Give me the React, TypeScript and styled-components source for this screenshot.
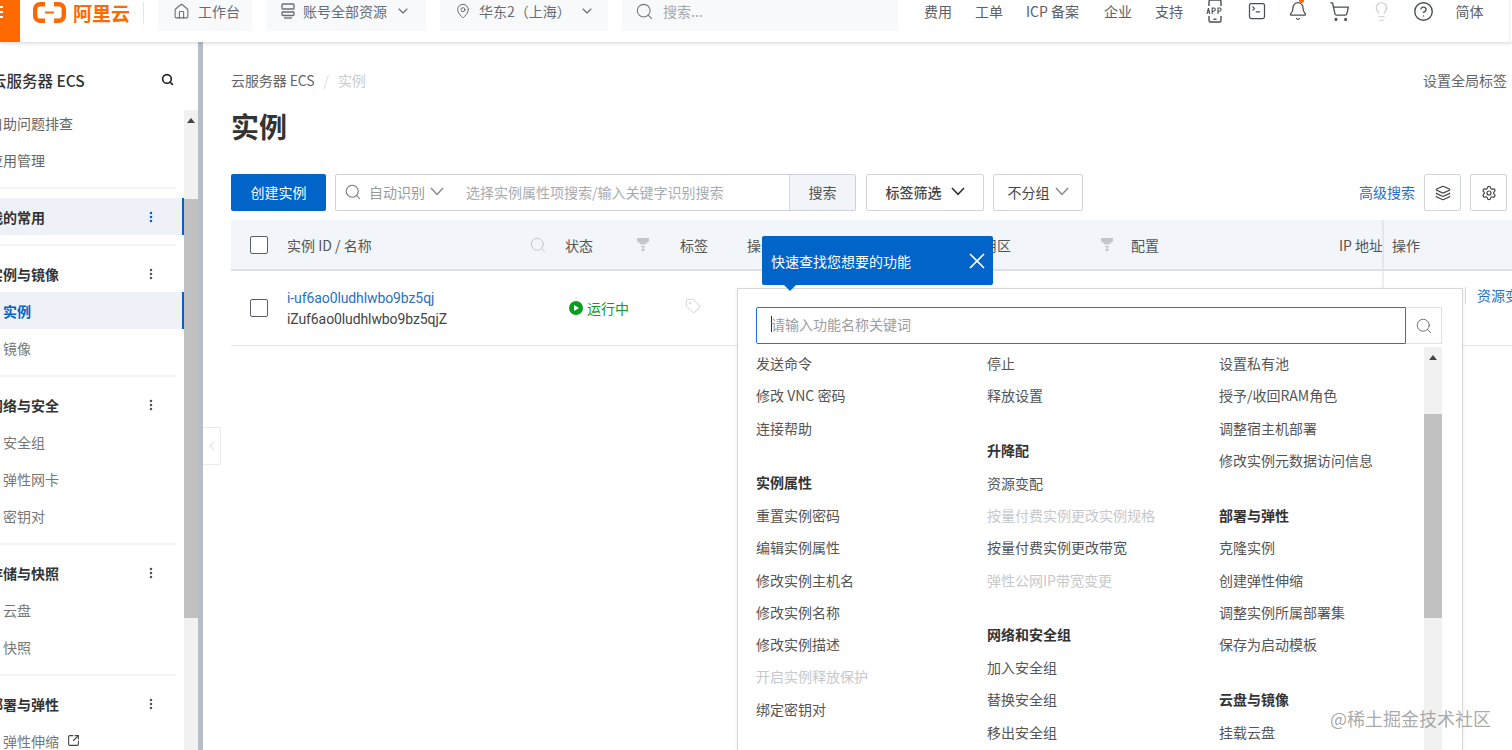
import React from "react";
import styled, { createGlobalStyle } from "styled-components";
import {
  Bell,
  ChevronDown,
  ChevronLeft,
  CircleHelp,
  EllipsisVertical,
  Home,
  Layers,
  Lightbulb,
  MapPin,
  Search,
  Settings,
  ShoppingCart,
  SquareArrowOutUpRight,
  SquareTerminal,
  Tag,
  X,
} from "lucide-react";

const GlobalStyle = createGlobalStyle`
  html, body {
    margin: 0;
    padding: 0;
    height: 100%;
    overflow: hidden;
    background: #fff;
  }
  * { box-sizing: border-box; }
  body {
    font-family: "Noto Sans CJK SC", "Noto Sans", sans-serif;
    font-size: 14px;
    color: #333;
  }
`;

const SIDE_GROUPS = [
  { title: "自助问题排查", plain: true, items: ["应用管理"] },
  { title: "我的常用", active: true, items: [] },
  { title: "实例与镜像", items: ["实例", "镜像"], current: "实例" },
  { title: "网络与安全", items: ["安全组", "弹性网卡", "密钥对"] },
  { title: "存储与快照", items: ["云盘", "快照"] },
  { title: "部署与弹性", items: ["弹性伸缩"], external: "弹性伸缩" },
];

const MENU_COLUMNS = [
  [
    { items: ["发送命令", "修改 VNC 密码", "连接帮助"] },
    {
      title: "实例属性",
      items: ["重置实例密码", "编辑实例属性", "修改实例主机名", "修改实例名称", "修改实例描述", "开启实例释放保护", "绑定密钥对"],
      disabled: ["开启实例释放保护"],
    },
  ],
  [
    { items: ["停止", "释放设置"] },
    {
      title: "升降配",
      items: ["资源变配", "按量付费实例更改实例规格", "按量付费实例更改带宽", "弹性公网IP带宽变更"],
      disabled: ["按量付费实例更改实例规格", "弹性公网IP带宽变更"],
    },
    { title: "网络和安全组", items: ["加入安全组", "替换安全组", "移出安全组"] },
  ],
  [
    { items: ["设置私有池", "授予/收回RAM角色", "调整宿主机部署", "修改实例元数据访问信息"] },
    { title: "部署与弹性", items: ["克隆实例", "创建弹性伸缩", "调整实例所属部署集", "保存为启动模板"] },
    { title: "云盘与镜像", items: ["挂载云盘"] },
  ],
];

const Funnel = () => (
  <svg width="12" height="13" viewBox="0 0 12 13" fill="#c4c6cb">
    <path d="M0 0h12v3L8 6.5h-4L0 3z" />
    <path d="M4 8h4v1.6H4zM4.6 10.6h2.8V13H4.6z" />
  </svg>
);

const WideChevron = ({ color = "#888", weight = 1.4 }: { color?: string; weight?: number }) => (
  <svg width="14" height="9" viewBox="0 0 14 9" fill="none" stroke={color} strokeWidth={weight}>
    <path d="M1 1l6 6.400L13 1" />
  </svg>
);

const ResourceIcon = () => (
  <svg width="14" height="16" viewBox="0 0 14 16" fill="none" stroke="#666c75" strokeWidth="1.3">
    <rect x="1" y="1" width="12" height="5" rx="1" />
    <path d="M1 9h12M1 9v2.500a1 1 0 0 0 1 1h10a1 1 0 0 0 1-1V9" />
    <path d="M3 15h8" />
  </svg>
);

const AppIcon = () => (
  <svg width="18" height="24" viewBox="0 0 18 24" fill="none" stroke="#4a4f57" strokeWidth="1.4">
    <path d="M3 7V2.500A1.500 1.500 0 0 1 4.500 1h9A1.500 1.500 0 0 1 15 2.500V7" />
    <path d="M3 17v4.500A1.500 1.500 0 0 0 4.500 23h9a1.500 1.500 0 0 0 1.500-1.500V17" />
    <path d="M7.500 20.200h3" />
    <path d="M1 15l1.400-6 1.400 6M1.500 13h1.800M6.200 15V9h1.500a1.500 1.500 0 0 1 0 3.200H6.200M12 15V9h1.500a1.500 1.500 0 0 1 0 3.200H12" strokeWidth="1.1" />
  </svg>
);

const LogoMark = () => (
  <svg width="33" height="21" viewBox="0 0 33 21" fill="none" stroke="#ff6a00" strokeWidth="4.4">
    <path d="M12 2.200H7A4.800 4.800 0 0 0 2.200 7v7A4.800 4.800 0 0 0 7 18.800h5" />
    <path d="M21 2.200h5A4.800 4.800 0 0 1 30.800 7v7a4.800 4.800 0 0 1-4.800 4.800h-5" />
    <path d="M12 10.500h9" strokeWidth="2" />
  </svg>
);

export default function App() {
  return (
    <Page>
      <GlobalStyle />
      <TopBar>
        <BurgerTile>
          <BurgerLines />
        </BurgerTile>
        <Logo>
          <LogoMark />
          <LogoText>阿里云</LogoText>
        </Logo>
        <TopDivider />
        <TopButton $width={94}>
          <Home size={17} strokeWidth={1.5} />
          工作台
        </TopButton>
        <TopButton $width={160}>
          <ResourceIcon />
          账号全部资源
          <ChevronDown size={16} strokeWidth={1.6} />
        </TopButton>
        <TopButton $width={168}>
          <MapPin size={16} strokeWidth={1.5} />
          华东2（上海）
          <ChevronDown size={16} strokeWidth={1.6} />
        </TopButton>
        <TopSearch>
          <Search size={19} strokeWidth={1.3} color="#777" />
          搜索...
        </TopSearch>
        <TopLinks>
          <TopLink>费用</TopLink>
          <TopLink>工单</TopLink>
          <TopLink $wide>ICP 备案</TopLink>
          <TopLink>企业</TopLink>
          <TopLink>支持</TopLink>
          <TopIcon><AppIcon /></TopIcon>
          <TopIcon><SquareTerminal size={20} strokeWidth={1.5} /></TopIcon>
          <TopIcon>
            <Bell size={20} strokeWidth={1.5} />
            <BellDot />
          </TopIcon>
          <TopIcon><ShoppingCart size={21} strokeWidth={1.5} /></TopIcon>
          <TopIcon $muted><Lightbulb size={21} strokeWidth={1.4} /></TopIcon>
          <TopIcon><CircleHelp size={21} strokeWidth={1.6} /></TopIcon>
          <TopLink>简体</TopLink>
        </TopLinks>
        <EdgeLine />
      </TopBar>

      <Body>
        <Sidebar>
          <SideInner>
            <SideTitleRow>
              <SideTitle>云服务器 ECS</SideTitle>
              <Search size={13} strokeWidth={3} color="#222" />
            </SideTitleRow>
            {SIDE_GROUPS.map((group, i) => (
              <SideGroup key={group.title} $first={i === 0}>
                <SideHeading $active={group.active} $plain={group.plain}>
                  <SideCut>{group.title}</SideCut>
                  {!group.plain && (
                    <Dots $active={group.active}>
                      <EllipsisVertical size={14} strokeWidth={2.4} />
                    </Dots>
                  )}
                </SideHeading>
                {group.items.map((item) => (
                  <SideItem key={item} $current={item === group.current} $plain={group.plain}>
                    <span>{item}</span>
                    {item === group.external && <SquareArrowOutUpRight size={13} strokeWidth={2} color="#444" />}
                  </SideItem>
                ))}
              </SideGroup>
            ))}
          </SideInner>
          <SideScroll>
            <ScrollArrow />
            <SideThumb />
          </SideScroll>
        </Sidebar>
        <SideEdge />

        <Main>
          <CollapseHandle>
            <ChevronLeft size={14} strokeWidth={1} color="#b5b9c0" />
          </CollapseHandle>
          <TopLine>
            <Breadcrumb>
              云服务器 ECS
              <CrumbSep>/</CrumbSep>
              <CrumbNow>实例</CrumbNow>
            </Breadcrumb>
            <GlobalTag>设置全局标签</GlobalTag>
          </TopLine>
          <PageTitle>实例</PageTitle>

          <Toolbar>
            <PrimaryButton>创建实例</PrimaryButton>
            <SearchBox>
              <SearchField>
                <Search size={18} strokeWidth={1.4} color="#777" />
                <SearchMode>
                  自动识别
                  <WideChevron />
                </SearchMode>
                <SearchHint>选择实例属性项搜索/输入关键字识别搜索</SearchHint>
              </SearchField>
              <SearchButton>搜索</SearchButton>
            </SearchBox>
            <GhostButton $width={118} $bold>
              标签筛选
              <WideChevron color="#333" weight={1.6} />
            </GhostButton>
            <GhostButton $width={90}>
              不分组
              <WideChevron />
            </GhostButton>
            <AdvancedLink>高级搜索</AdvancedLink>
            <IconButton><Layers size={16} strokeWidth={1.8} /></IconButton>
            <IconButton><Settings size={16} strokeWidth={1.8} /></IconButton>
          </Toolbar>

          <Table>
            <HeadRow>
              <CheckCell><CheckBox /></CheckCell>
              <HeadCell>
                实例 ID / 名称
                <Search size={18} strokeWidth={1.3} color="#bfc2c7" />
              </HeadCell>
              <HeadCell>状态<Funnel /></HeadCell>
              <HeadCell>标签</HeadCell>
              <HeadCell>操作系统</HeadCell>
              <HeadCell>可用区<Funnel /></HeadCell>
              <HeadCell>配置</HeadCell>
              <HeadCell>IP 地址</HeadCell>
              <StickyCell>操作</StickyCell>
            </HeadRow>
            <DataRow>
              <CheckCell><CheckBox /></CheckCell>
              <IdCell>
                <IdLink>i-uf6ao0ludhlwbo9bz5qj</IdLink>
                <span>iZuf6ao0ludhlwbo9bz5qjZ</span>
              </IdCell>
              <StatusCell>
                <PlayDot />
                运行中
              </StatusCell>
              <TagCell><Tag size={16} strokeWidth={1.2} color="#c4c6cb" /></TagCell>
              <span />
              <span />
              <span />
              <span />
              <StickyData>
                <RowLink>资源变配</RowLink>
              </StickyData>
            </DataRow>
          </Table>
        </Main>
      </Body>

      <Tip>
        快速查找您想要的功能
        <X size={26} strokeWidth={1.6} color="#fff" />
      </Tip>

      <Finder>
        <FinderSearch>
          <FinderInput>
            <Caret />
            请输入功能名称关键词
          </FinderInput>
          <FinderButton><Search size={18} strokeWidth={1.2} color="#666" /></FinderButton>
        </FinderSearch>
        <FinderBody>
          <FinderGrid>
            {MENU_COLUMNS.map((column, c) => (
              <div key={c}>
                {column.map((group, g) => (
                  <FinderGroup key={g} $first={g === 0}>
                    {group.title && <FinderTitle>{group.title}</FinderTitle>}
                    {group.items.map((item) => (
                      <FinderItem key={item} $disabled={group.disabled?.includes(item)}>
                        {item}
                      </FinderItem>
                    ))}
                  </FinderGroup>
                ))}
              </div>
            ))}
          </FinderGrid>
          <FinderScroll>
            <ScrollArrow />
            <FinderThumb />
          </FinderScroll>
        </FinderBody>
      </Finder>

      <Watermark>@稀土掘金技术社区</Watermark>
    </Page>
  );
}

const Page = styled.div`
  position: relative;
  width: 1512px;
  height: 750px;
  overflow: hidden;
  background: #fff;
  display: flex;
  flex-direction: column;
`;

const TopBar = styled.header`
  position: relative;
  z-index: 3;
  flex: 0 0 42px;
  display: flex;
  align-items: flex-start;
  background: #fff;
  box-shadow: 0 1px 4px rgba(0, 0, 0, 0.18);
`;

const BurgerTile = styled.div`
  width: 20px;
  height: 42px;
  background: #ff6a00;
  overflow: hidden;
`;

const BurgerLines = styled.div`
  width: 3px;
  height: 13px;
  margin-top: 6px;
  background: repeating-linear-gradient(#fff 0 2px, transparent 2px 5px);
`;

const Logo = styled.div`
  display: flex;
  align-items: center;
  gap: 7px;
  height: 25px;
  margin-left: 13px;
  width: 97px;
`;

const LogoText = styled.span`
  color: #ff6a00;
  font-size: 19px;
  line-height: 25px;
  font-weight: 700;
  white-space: nowrap;
`;

const TopDivider = styled.div`
  width: 1px;
  height: 22px;
  margin: 2px 14px 0 13px;
  background: #e3e5e8;
`;

const TopButton = styled.div<{ $width: number }>`
  width: ${(p) => p.$width}px;
  height: 31px;
  margin-right: 14px;
  padding: 0 15px 9px;
  display: flex;
  align-items: center;
  gap: 8px;
  background: #f8f9fa;
  color: #666c75;
  font-size: 14px;
  white-space: nowrap;

  svg {
    flex: none;
  }

  svg:last-child:not(:first-child) {
    margin-left: auto;
  }
`;

const TopSearch = styled.div`
  width: 276px;
  height: 31px;
  padding: 0 13px 9px;
  display: flex;
  align-items: center;
  gap: 9px;
  background: #f8f9fa;
  color: #a5a8ad;
  font-size: 14px;
`;

const TopLinks = styled.nav`
  flex: 1;
  display: flex;
  align-items: center;
  height: 22px;
  margin-left: 26px;
`;

const TopLink = styled.span<{ $wide?: boolean }>`
  margin-right: ${(p) => (p.$wide ? "25px" : "23px")};
  color: #5c6066;
  font-size: 14px;
  white-space: nowrap;
`;

const TopIcon = styled.span<{ $muted?: boolean }>`
  position: relative;
  display: flex;
  justify-content: center;
  width: 18px;
  margin-right: 23.6px;
  color: ${(p) => (p.$muted ? "#c9ccd0" : "#4a4f57")};

  svg {
    flex: none;
  }
`;

const BellDot = styled.i`
  position: absolute;
  top: -3px;
  right: 3px;
  width: 5px;
  height: 5px;
  border-radius: 50%;
  background: #ff6a00;
`;

const EdgeLine = styled.div`
  position: absolute;
  top: 0;
  left: 1509px;
  width: 1px;
  height: 42px;
  background: #eceef0;
`;

const Body = styled.div`
  flex: 1;
  min-height: 0;
  display: flex;
`;

const Sidebar = styled.aside`
  width: 198px;
  display: flex;
  overflow: hidden;
`;

const SideInner = styled.div`
  width: 184px;
  flex: none;
`;

const SideTitleRow = styled.div`
  height: 59px;
  padding: 16px 10px 0 0;
  display: flex;
  align-items: center;
  justify-content: space-between;
`;

const SideTitle = styled.div`
  margin-left: -9px;
  font-size: 15.5px;
  font-weight: 500;
  color: #333;
  white-space: nowrap;
`;

const SideGroup = styled.section<{ $first?: boolean }>`
  padding: ${(p) => (p.$first ? "3px 0 9px" : "9px 0 9px")};
  border-bottom: 2px solid #f3f4f6;
  margin-right: 8px;
`;

const SideHeading = styled.div<{ $active?: boolean; $plain?: boolean }>`
  height: 37px;
  margin-right: -8px;
  display: flex;
  align-items: center;
  justify-content: space-between;
  font-weight: ${(p) => (p.$plain ? 400 : 700)};
  color: ${(p) => (p.$plain ? "#666" : "#333")};
  background: ${(p) => (p.$active ? "#eef2f8" : "transparent")};
  border-right: 2px solid ${(p) => (p.$active ? "#0064c8" : "transparent")};
  padding-right: 24px;
`;

const SideCut = styled.span`
  margin-left: -11px;
  font-size: 14px;
  white-space: nowrap;
`;

const Dots = styled.span<{ $active?: boolean }>`
  display: flex;
  color: ${(p) => (p.$active ? "#0064c8" : "#555")};
`;

const SideItem = styled.div<{ $current?: boolean; $plain?: boolean }>`
  height: 37px;
  margin-right: -8px;
  padding-left: ${(p) => (p.$plain ? "0" : "3px")};
  display: flex;
  align-items: center;
  gap: 8px;
  white-space: nowrap;
  color: ${(p) => (p.$current ? "#0064c8" : p.$plain ? "#666" : "#777")};
  font-weight: ${(p) => (p.$current ? 700 : 400)};
  background: ${(p) => (p.$current ? "#eef2f8" : "transparent")};
  border-right: 2px solid ${(p) => (p.$current ? "#0064c8" : "transparent")};

  span {
    margin-left: ${(p) => (p.$plain ? "-11px" : "0")};
  }
`;

const SideScroll = styled.div`
  width: 14px;
  flex: none;
  margin-top: 68px;
  background: #f1f1f1;
  display: flex;
  flex-direction: column;
`;

const ScrollArrow = styled.div`
  flex: none;
  align-self: center;
  width: 0;
  height: 0;
  margin-top: 8px;
  border-left: 4px solid transparent;
  border-right: 4px solid transparent;
  border-bottom: 5px solid #444;
`;

const SideThumb = styled.div`
  height: 419px;
  margin-top: 76px;
  background: #c1c1c1;
`;

const SideEdge = styled.div`
  width: 5px;
  flex: none;
  background: #b9bdca;
`;

const Main = styled.main`
  position: relative;
  flex: 1;
  min-width: 0;
  padding: 28px 0 0 28px;
`;

const CollapseHandle = styled.div`
  position: absolute;
  top: 385px;
  left: 0;
  width: 18px;
  height: 38px;
  display: flex;
  align-items: center;
  justify-content: center;
  background: #fff;
  border: 1px solid #e8eaed;
  border-left: none;
  border-radius: 0 2px 2px 0;
`;

const TopLine = styled.div`
  display: flex;
  justify-content: space-between;
  align-items: center;
  height: 20px;
  padding-right: 5px;
`;

const Breadcrumb = styled.div`
  display: flex;
  align-items: center;
  color: #666;
  font-size: 14px;
  letter-spacing: -0.1px;
`;

const CrumbSep = styled.span`
  margin: 0 9px 0 9px;
  color: #dcdee1;
`;

const CrumbNow = styled.span`
  color: #c9ccd0;
`;

const GlobalTag = styled.span`
  color: #666;
  font-size: 14px;
`;

const PageTitle = styled.h1`
  margin: 16px 0 0;
  height: 40px;
  font-size: 28px;
  line-height: 40px;
  font-weight: 700;
  color: #333;
`;

const Toolbar = styled.div`
  margin-top: 28px;
  height: 37px;
  display: flex;
  align-items: stretch;
  padding-right: 5px;
`;

const PrimaryButton = styled.button`
  width: 95px;
  padding: 0 0 2px;
  border: none;
  border-radius: 2px;
  background: #0064c8;
  color: #fff;
  font: inherit;
  font-size: 14px;
`;

const SearchBox = styled.div`
  width: 521px;
  margin: 0 10px 0 9px;
  display: flex;
  border: 1px solid #cfd2d6;
  border-radius: 2px;
`;

const SearchField = styled.div`
  flex: 1;
  display: flex;
  align-items: center;
  padding: 0 0 2px 8px;
  color: #a3a6ab;
`;

const SearchMode = styled.span`
  display: flex;
  align-items: center;
  gap: 5px;
  margin-left: 7px;
  color: #999;
`;

const SearchHint = styled.span`
  margin-left: 22px;
  color: #a8abb0;
`;

const SearchButton = styled.div`
  width: 66px;
  padding-bottom: 2px;
  display: flex;
  align-items: center;
  justify-content: center;
  background: #f1f4f8;
  border-left: 1px solid #d5d8dc;
  color: #555;
`;

const GhostButton = styled.div<{ $width: number; $bold?: boolean }>`
  width: ${(p) => p.$width}px;
  margin-right: 9px;
  padding-bottom: 2px;
  display: flex;
  align-items: center;
  justify-content: center;
  gap: ${(p) => (p.$bold ? "9px" : "5px")};
  border: 1px solid #d2d5d9;
  border-radius: 2px;
  color: #444;
  font-weight: ${(p) => (p.$bold ? 500 : 400)};
`;

const AdvancedLink = styled.a`
  margin-left: auto;
  margin-right: 9px;
  padding-bottom: 2px;
  align-self: center;
  color: #2a6fc0;
`;

const IconButton = styled.div`
  width: 37px;
  display: flex;
  align-items: center;
  justify-content: center;
  border: 1px solid #d2d5d9;
  border-radius: 2px;
  color: #444;

  & + & {
    margin-left: 9px;
  }
`;

const Table = styled.div`
  margin-top: 9px;
  margin-right: -2px;
`;

const COLUMNS = "56px 278px 115px 67px 222px 162px 208px 53px 120px";

const HeadRow = styled.div`
  display: grid;
  grid-template-columns: ${COLUMNS};
  height: 51px;
  align-items: center;
  background: #f2f5f9;
  border-bottom: 2px solid #dcdfe3;
  color: #555;
  white-space: nowrap;
`;

const DataRow = styled.div`
  display: grid;
  grid-template-columns: ${COLUMNS};
  height: 75px;
  align-items: center;
  background: #fff;
  border-bottom: 1px solid #e6e8eb;
`;

const CheckCell = styled.div`
  display: flex;
  padding-left: 19px;
`;

const CheckBox = styled.span`
  width: 18px;
  height: 18px;
  border: 1px solid #555f70;
  border-radius: 2px;
  background: #fff;
`;

const HeadCell = styled.div`
  display: flex;
  align-items: center;
  justify-content: space-between;
  padding-right: 18px;
  font-size: 14px;
  min-width: 0;

  &:nth-child(3) {
    padding-right: 31px;
  }

  &:nth-child(8) {
    padding-right: 0;
  }
`;

const StickyCell = styled.div`
  align-self: stretch;
  display: flex;
  align-items: center;
  margin-left: -10px;
  padding-left: 8px;
  border-left: 2px solid #e3e6ea;
  background: #f2f5f9;
`;

const StickyData = styled.div`
  align-self: stretch;
  display: flex;
  margin-left: -10px;
  padding: 16px 0 0 92px;
  border-left: 2px solid #eceef1;
`;

const RowLink = styled.a`
  padding-left: 11px;
  margin-left: -11px;
  height: 17px;
  line-height: 17px;
  border-left: 1px solid #d5d8dc;
  color: #2a6fc0;
  white-space: nowrap;
`;

const IdCell = styled.div`
  display: flex;
  flex-direction: column;
  gap: 1px;
  color: #444;
  font-family: Roboto, "Noto Sans CJK SC", sans-serif;
  font-size: 14px;
  letter-spacing: -0.1px;
  line-height: 20px;
`;

const IdLink = styled.a`
  color: #2a6fc0;
`;

const StatusCell = styled.div`
  display: flex;
  align-items: center;
  gap: 4px;
  padding-left: 4px;
  color: #0a9e2a;
`;

const PlayDot = styled.i`
  position: relative;
  width: 14px;
  height: 14px;
  border-radius: 50%;
  background: #0a9e1f;

  &::after {
    content: "";
    position: absolute;
    top: 3.5px;
    left: 5px;
    border-left: 5px solid #fff;
    border-top: 3.5px solid transparent;
    border-bottom: 3.5px solid transparent;
  }
`;

const TagCell = styled.div`
  display: flex;
  padding: 0 0 4px 5px;
`;

const Tip = styled.div`
  position: absolute;
  z-index: 5;
  top: 236px;
  left: 762px;
  width: 231px;
  height: 49px;
  padding: 0 3px 0 9px;
  display: flex;
  align-items: center;
  justify-content: space-between;
  background: #0064c8;
  border-radius: 2px;
  color: #fff;
  font-size: 14px;

  &::after {
    content: "";
    position: absolute;
    left: 22px;
    bottom: -6px;
    border-left: 6px solid transparent;
    border-right: 6px solid transparent;
    border-top: 6px solid #0064c8;
  }
`;

const Finder = styled.div`
  position: absolute;
  z-index: 4;
  top: 288px;
  left: 737px;
  width: 726px;
  height: 470px;
  padding: 18px 20px 0 18px;
  background: #fff;
  border: 1px solid #d5d7da;
  box-shadow: 0 1px 4px rgba(0, 0, 0, 0.08);
`;

const FinderSearch = styled.div`
  display: flex;
  height: 37px;
`;

const FinderInput = styled.div`
  flex: 1;
  display: flex;
  align-items: center;
  padding: 0 0 3px 14px;
  border: 1px solid #1f78d1;
  border-radius: 2px 0 0 2px;
  color: #9a9da2;
`;

const Caret = styled.i`
  width: 1px;
  height: 16px;
  margin-right: -1px;
  background: #333;
`;

const FinderButton = styled.div`
  width: 36px;
  display: flex;
  align-items: center;
  justify-content: center;
  border: 1px solid #dfe1e4;
  border-left: none;
`;

const FinderBody = styled.div`
  display: flex;
  margin-top: 3px;
`;

const FinderGrid = styled.div`
  flex: 1;
  display: grid;
  grid-template-columns: 231px 232px 205px;
`;

const FinderGroup = styled.div<{ $first?: boolean }>`
  margin-top: ${(p) => (p.$first ? "0" : "23.6px")};
`;

const FinderTitle = styled.div`
  height: 31.5px;
  line-height: 31.5px;
  font-weight: 700;
  color: #333;
  white-space: nowrap;
`;

const FinderItem = styled.div<{ $disabled?: boolean }>`
  height: 32.3px;
  line-height: 32.3px;
  color: ${(p) => (p.$disabled ? "#c6c8cc" : "#555")};
  white-space: nowrap;
`;

const FinderScroll = styled.div`
  width: 18px;
  flex: none;
  height: 420px;
  background: #f1f1f1;
  display: flex;
  flex-direction: column;
`;

const FinderThumb = styled.div`
  height: 204px;
  margin-top: 54px;
  background: #c1c1c1;
`;

const Watermark = styled.div`
  position: absolute;
  z-index: 6;
  top: 705px;
  left: 1330px;
  color: rgba(120, 120, 120, 0.65);
  font-size: 18px;
  line-height: 26px;
  white-space: nowrap;
`;
